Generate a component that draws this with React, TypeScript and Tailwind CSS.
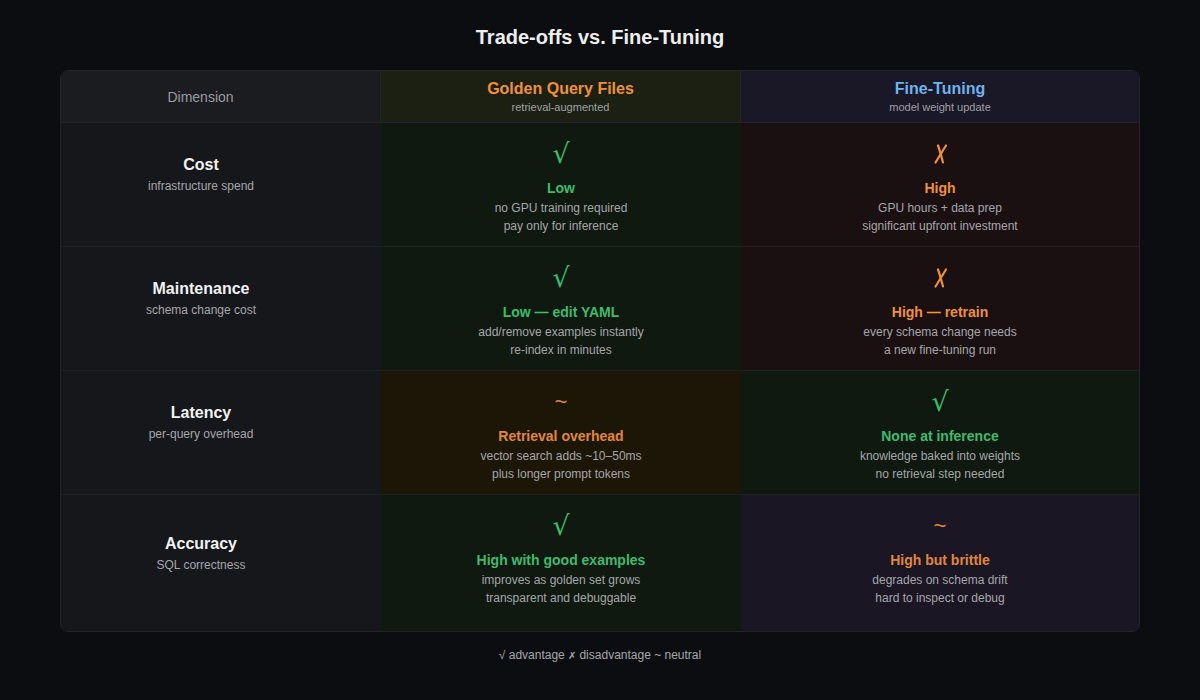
import React from 'react';

type Kind = 'good' | 'bad' | 'mid';

interface Cell {
  kind: Kind;
  label: string;
  lines: string[];
  bg: string;
}

interface Row {
  name: string;
  sub: string;
  h: string;
  golden: Cell;
  fine: Cell;
}

const rows: Row[] = [
  {
    name: 'Cost',
    sub: 'infrastructure spend',
    h: 'h-[124px]',
    golden: { kind: 'good', label: 'Low', lines: ['no GPU training required', 'pay only for inference'], bg: 'bg-[#0f1910]' },
    fine: { kind: 'bad', label: 'High', lines: ['GPU hours + data prep', 'significant upfront investment'], bg: 'bg-[#1a1012]' },
  },
  {
    name: 'Maintenance',
    sub: 'schema change cost',
    h: 'h-[124px]',
    golden: { kind: 'good', label: 'Low — edit YAML', lines: ['add/remove examples instantly', 're-index in minutes'], bg: 'bg-[#0f1910]' },
    fine: { kind: 'bad', label: 'High — retrain', lines: ['every schema change needs', 'a new fine-tuning run'], bg: 'bg-[#1a1012]' },
  },
  {
    name: 'Latency',
    sub: 'per-query overhead',
    h: 'h-[124px]',
    golden: { kind: 'mid', label: 'Retrieval overhead', lines: ['vector search adds ~10–50ms', 'plus longer prompt tokens'], bg: 'bg-[#1c1607]' },
    fine: { kind: 'good', label: 'None at inference', lines: ['knowledge baked into weights', 'no retrieval step needed'], bg: 'bg-[#0f1910]' },
  },
  {
    name: 'Accuracy',
    sub: 'SQL correctness',
    h: 'h-[136px]',
    golden: { kind: 'good', label: 'High with good examples', lines: ['improves as golden set grows', 'transparent and debuggable'], bg: 'bg-[#0f1910]' },
    fine: { kind: 'mid', label: 'High but brittle', lines: ['degrades on schema drift', 'hard to inspect or debug'], bg: 'bg-[#1a1624]' },
  },
];

function Symbol({ kind }: { kind: Kind }) {
  if (kind === 'good') {
    return <div className="h-[30px] text-[27px] leading-[30px] text-[#3dbb6f] font-['DejaVu_Sans',sans-serif]">√</div>;
  }
  if (kind === 'bad') {
    // slanted cross mark
    return (
      <div className="h-[30px] flex items-center justify-center">
        <svg width="16" height="22" viewBox="0 0 16 22" fill="none" stroke="#f0913a" strokeWidth="2.2" strokeLinecap="round">
          <path d="M6 2.5 C8 8, 9.5 14, 11 19.5" />
          <path d="M14 2.5 L3.5 19.5" />
        </svg>
      </div>
    );
  }
  return <div className="h-[30px] text-[22px] leading-[30px] text-[#e0873a] font-['Liberation_Sans',sans-serif]">~</div>;
}

function ValueCell({ cell, width }: { cell: Cell; width: string }) {
  const labelColor =
    cell.kind === 'good' ? 'text-[#3dbb6f]' : cell.kind === 'bad' ? 'text-[#f0913a]' : 'text-[#e0873a]';
  return (
    <div className={`${width} ${cell.bg} flex flex-col items-center pt-[16px] text-center`}>
      <Symbol kind={cell.kind} />
      <div className={`mt-[10px] text-[14px] leading-[18px] font-bold ${labelColor}`}>{cell.label}</div>
      <div className="mt-[2px] text-[12px] leading-[18px] text-[#a6a6aa]">
        {cell.lines.map((l) => (
          <div key={l}>{l}</div>
        ))}
      </div>
    </div>
  );
}

export default function App() {
  return (
    <div className="w-[1200px] h-[700px] bg-[#0c0d10] font-['Liberation_Sans',Arial,sans-serif] flex flex-col items-center">
      <h1 className="mt-[25px] text-[20px] leading-[24px] font-bold text-[#eeeeee]">Trade-offs vs. Fine-Tuning</h1>

      <div className="mt-[21px] w-[1080px] rounded-[8px] border border-[#232428] overflow-hidden">
        {/* header */}
        <div className="flex h-[52px] border-b border-[#232428]">
          <div className="w-[319px] bg-[#1b1c20] flex items-center justify-center pt-[2px] pr-[40px] text-[14px] text-[#9a9ba0]">
            Dimension
          </div>
          <div className="w-[360px] bg-[#1b2013] border-l border-[#232428] flex flex-col items-center justify-center">
            <div className="text-[16px] leading-[20px] font-bold text-[#f0913a]">Golden Query Files</div>
            <div className="mt-[1px] text-[11px] leading-[14px] text-[#a0a0a4]">retrieval-augmented</div>
          </div>
          <div className="flex-1 bg-[#1a1726] border-l border-[#232428] flex flex-col items-center justify-center">
            <div className="text-[16px] leading-[20px] font-bold text-[#6cb4ee]">Fine-Tuning</div>
            <div className="mt-[1px] text-[11px] leading-[14px] text-[#a0a0a4]">model weight update</div>
          </div>
        </div>

        {rows.map((r, i) => (
          <div key={r.name} className={`flex ${r.h} ${i < rows.length - 1 ? 'border-b border-[#1f2023]' : ''}`}>
            <div className="w-[320px] bg-[#16171b] flex flex-col items-center justify-center pb-[20px] pr-[40px]">
              <div className="text-[16px] leading-[20px] font-bold text-[#f2f2f2]">{r.name}</div>
              <div className="mt-[3px] text-[12px] leading-[16px] text-[#a6a6aa]">{r.sub}</div>
            </div>
            <ValueCell cell={r.golden} width="w-[360px]" />
            <ValueCell cell={r.fine} width="flex-1" />
          </div>
        ))}
      </div>

      <div className="mt-[16px] text-[12px] leading-[14px] text-[#a6a6aa]">
        √ advantage <span className="text-[10px]">✗</span> disadvantage ~ neutral
      </div>
    </div>
  );
}
